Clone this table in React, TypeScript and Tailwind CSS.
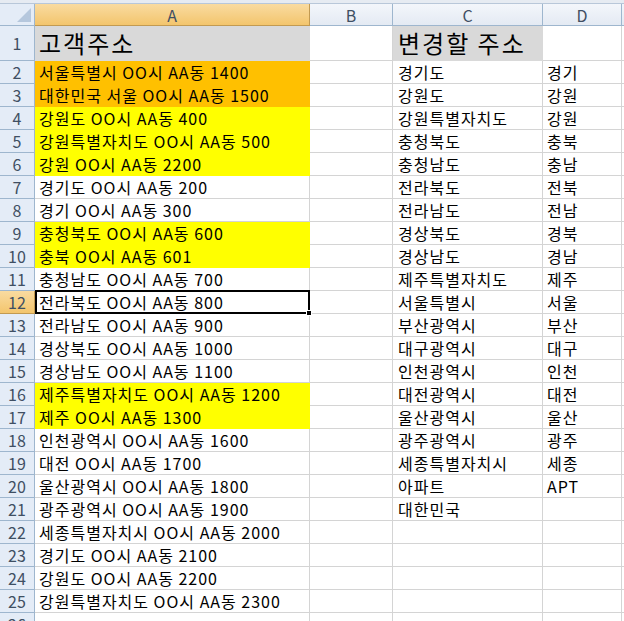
import React from "react";

const FONT = { fontFamily: '"Noto Sans CJK KR", "Noto Sans", sans-serif' };

type Fill = "none" | "orange" | "yellow";

const aData: [string, Fill][] = [
  ["서울특별시 OO시 AA동 1400", "orange"],
  ["대한민국 서울 OO시 AA동 1500", "orange"],
  ["강원도 OO시 AA동 400", "yellow"],
  ["강원특별자치도 OO시 AA동 500", "yellow"],
  ["강원 OO시 AA동 2200", "yellow"],
  ["경기도 OO시 AA동 200", "none"],
  ["경기 OO시 AA동 300", "none"],
  ["충청북도 OO시 AA동 600", "yellow"],
  ["충북 OO시 AA동 601", "yellow"],
  ["충청남도 OO시 AA동 700", "none"],
  ["전라북도 OO시 AA동 800", "none"],
  ["전라남도 OO시 AA동 900", "none"],
  ["경상북도 OO시 AA동 1000", "none"],
  ["경상남도 OO시 AA동 1100", "none"],
  ["제주특별자치도 OO시 AA동 1200", "yellow"],
  ["제주 OO시 AA동 1300", "yellow"],
  ["인천광역시 OO시 AA동 1600", "none"],
  ["대전 OO시 AA동 1700", "none"],
  ["울산광역시 OO시 AA동 1800", "none"],
  ["광주광역시 OO시 AA동 1900", "none"],
  ["세종특별자치시 OO시 AA동 2000", "none"],
  ["경기도 OO시 AA동 2100", "none"],
  ["강원도 OO시 AA동 2200", "none"],
  ["강원특별자치도 OO시 AA동 2300", "none"],
];

const cdData: [string, string][] = [
  ["경기도", "경기"],
  ["강원도", "강원"],
  ["강원특별자치도", "강원"],
  ["충청북도", "충북"],
  ["충청남도", "충남"],
  ["전라북도", "전북"],
  ["전라남도", "전남"],
  ["경상북도", "경북"],
  ["경상남도", "경남"],
  ["제주특별자치도", "제주"],
  ["서울특별시", "서울"],
  ["부산광역시", "부산"],
  ["대구광역시", "대구"],
  ["인천광역시", "인천"],
  ["대전광역시", "대전"],
  ["울산광역시", "울산"],
  ["광주광역시", "광주"],
  ["세종특별자치시", "세종"],
  ["아파트", "APT"],
  ["대한민국", ""],
];

function RowHeader({ n, selected, h }: { n: number | string; selected?: boolean; h: string }) {
  return (
    <div
      className={`${h} w-[35px] shrink-0 flex items-center justify-center border-r border-b text-[16px] text-[#3f4f63] ${
        selected
          ? "bg-gradient-to-b from-[#f9dba0] to-[#f3c56c] border-[#c29a51]"
          : "bg-[#e4ecf7] border-[#9eb6ce]"
      }`}
    >
      {n}
    </div>
  );
}

export default function App() {
  return (
    <div className="w-[624px] h-[621px] overflow-hidden bg-white text-black" style={FONT}>
      {/* top band */}
      <div className="h-[4px] bg-[#e6ebf2] border-b border-[#b8c7d9]" />
      {/* column headers */}
      <div className="flex h-[22px]">
        <div className="w-[35px] shrink-0 relative bg-[#e4ecf7] border-r border-b border-[#9eb6ce]">
          <svg className="absolute right-[3px] bottom-[3px]" width="14" height="14" viewBox="0 0 14 14">
            <polygon points="14,0 14,14 0,14" fill="#b5c7dd" />
          </svg>
        </div>
        <div className="w-[275px] shrink-0 flex items-center justify-center border-r border-b border-[#c29a51] bg-gradient-to-b from-[#f9dba0] to-[#f3c56c] text-[16px] text-[#3f4f63]">
          A
        </div>
        {[
          ["B", "w-[83px]"],
          ["C", "w-[150px]"],
          ["D", "w-[79px]"],
        ].map(([l, w]) => (
          <div
            key={l}
            className={`${w} shrink-0 flex items-center justify-center border-r border-b border-[#9eb6ce] bg-gradient-to-b from-[#f3f6fb] to-[#e4eaf3] text-[16px] text-[#3f4f63]`}
          >
            {l}
          </div>
        ))}
        <div className="flex-1 border-b border-[#9eb6ce] bg-gradient-to-b from-[#f3f6fb] to-[#e4eaf3]" />
      </div>
      {/* row 1 */}
      <div className="flex h-[35px]">
        <RowHeader n={1} h="h-[35px]" />
        <div className="w-[275px] shrink-0 flex items-end pl-[4px] pb-[1px] bg-[#d9d9d9] border-r border-b border-[#d9d9d9] text-[24px] leading-[32px] tracking-[2px]">
          고객주소
        </div>
        <div className="w-[83px] shrink-0 border-r border-b border-[#d4d4d4]" />
        <div className="w-[150px] shrink-0 flex items-end pl-[5px] pb-[1px] bg-[#d9d9d9] border-r border-b border-[#d9d9d9] text-[24px] leading-[32px] tracking-[2px] whitespace-nowrap">
          변경할 주소
        </div>
        <div className="w-[79px] shrink-0 border-r border-b border-[#d4d4d4]" />
        <div className="flex-1 border-b border-[#d4d4d4]" />
      </div>
      {/* rows 2..25 */}
      {aData.map(([text, fill], i) => {
        const row = i + 2;
        const cd = cdData[i];
        const selected = row === 12;
        const fillCls =
          fill === "orange"
            ? "bg-[#ffc000] border-[#ffc000]"
            : fill === "yellow"
            ? "bg-[#ffff00] border-[#ffff00]"
            : "border-[#d4d4d4]";
        return (
          <div key={row} className="flex h-[23px]">
            <RowHeader n={row} selected={selected} h="h-[23px]" />
            <div
              className={`relative w-[275px] shrink-0 flex items-end pl-[4px] border-r border-b text-[16px] leading-[21px] tracking-[1px] whitespace-nowrap ${fillCls}`}
            >
              {text}
              {selected && (
                <div className="absolute top-[-1px] left-0 right-[-1px] bottom-[-1px] border-2 border-black z-10 pointer-events-none">
                  <div className="absolute right-[-4px] bottom-[-4px] w-[6px] h-[6px] bg-black border border-white" />
                </div>
              )}
            </div>
            <div className="w-[83px] shrink-0 border-r border-b border-[#d4d4d4]" />
            <div className="w-[150px] shrink-0 flex items-end pl-[5px] border-r border-b border-[#d4d4d4] text-[16px] leading-[21px] tracking-[1px] whitespace-nowrap overflow-hidden">
              {cd ? cd[0] : ""}
            </div>
            <div className="w-[79px] shrink-0 flex items-end pl-[4px] border-r border-b border-[#d4d4d4] text-[16px] leading-[21px] tracking-[1px] whitespace-nowrap overflow-hidden">
              {cd ? cd[1] : ""}
            </div>
            <div className="flex-1 border-b border-[#d4d4d4]" />
          </div>
        );
      })}
      {/* row 26 (partial) */}
      <div className="flex h-[23px]">
        <RowHeader n={26} h="h-[23px]" />
        <div className="w-[275px] shrink-0 border-r border-b border-[#d4d4d4]" />
        <div className="w-[83px] shrink-0 border-r border-b border-[#d4d4d4]" />
        <div className="w-[150px] shrink-0 border-r border-b border-[#d4d4d4]" />
        <div className="w-[79px] shrink-0 border-r border-b border-[#d4d4d4]" />
        <div className="flex-1 border-b border-[#d4d4d4]" />
      </div>
    </div>
  );
}
